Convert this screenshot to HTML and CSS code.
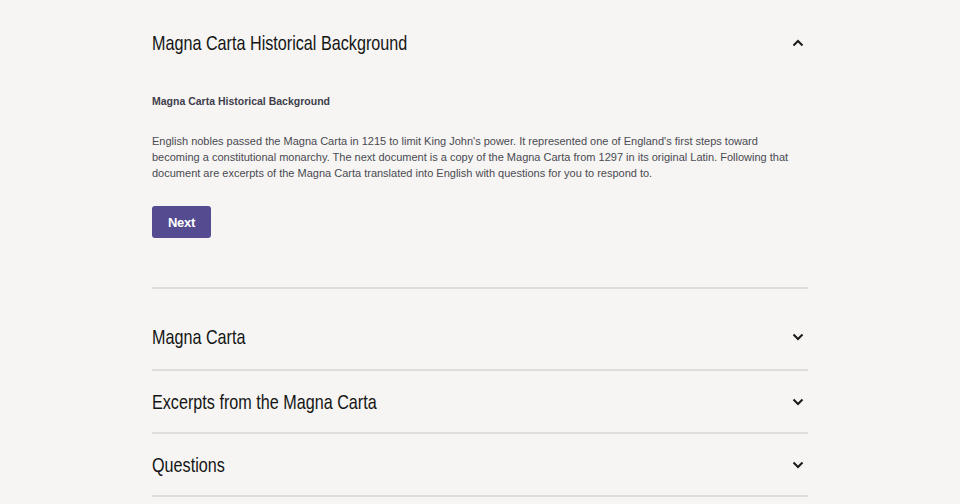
FILE: index.html
```html
<!DOCTYPE html>
<html>
<head>
<meta charset="utf-8">
<link rel="stylesheet" href="styles.css">
</head>
<body>
<div class="accordion">
  <section class="item open">
    <div class="item-head">
      <h2 class="item-title"><span>Magna Carta Historical Background</span></h2>
      <svg class="chev" width="12" height="8" viewBox="0 0 12 8"><path d="M1.5 6.5 L6 2 L10.5 6.5" fill="none" stroke="#1a1a1a" stroke-width="2"/></svg>
    </div>
    <div class="item-body">
      <h3 class="sub">Magna Carta Historical Background</h3>
      <p class="text">English nobles passed the Magna Carta in 1215 to limit King John's power. It represented one of England's first steps toward becoming a constitutional monarchy. The next document is a copy of the Magna Carta from 1297 in its original Latin. Following that document are excerpts of the Magna Carta translated into English with questions for you to respond to.</p>
      <button class="btn">Next</button>
    </div>
  </section>
  <section class="item first-closed">
    <div class="item-head">
      <h2 class="item-title"><span>Magna Carta</span></h2>
      <svg class="chev" width="12" height="8" viewBox="0 0 12 8"><path d="M1.5 1.5 L6 6 L10.5 1.5" fill="none" stroke="#1a1a1a" stroke-width="2"/></svg>
    </div>
  </section>
  <section class="item">
    <div class="item-head">
      <h2 class="item-title"><span>Excerpts from the Magna Carta</span></h2>
      <svg class="chev" width="12" height="8" viewBox="0 0 12 8"><path d="M1.5 1.5 L6 6 L10.5 1.5" fill="none" stroke="#1a1a1a" stroke-width="2"/></svg>
    </div>
  </section>
  <section class="item">
    <div class="item-head">
      <h2 class="item-title"><span>Questions</span></h2>
      <svg class="chev" width="12" height="8" viewBox="0 0 12 8"><path d="M1.5 1.5 L6 6 L10.5 1.5" fill="none" stroke="#1a1a1a" stroke-width="2"/></svg>
    </div>
  </section>
</div>
</body>
</html>
```
FILE: styles.css
```css
html, body {
  margin: 0;
  padding: 0;
  background: #f6f5f3;
}
body {
  font-family: "Liberation Sans", Arial, sans-serif;
  color: #1a1a1a;
}
.accordion {
  width: 656px;
  margin: 0 auto;
  padding-left: 8px;
  position: relative;
  left: -4px;
}
.item {
  border-bottom: 2px solid #dedddb;
}
.item-head {
  display: flex;
  align-items: center;
  justify-content: space-between;
  height: 61px;
  padding-right: 4px;
}
.open .item-head {
  height: 86px;
}
.first-closed .item-head {
  height: 64px;
  padding-top: 16px;
}
.item-title {
  margin: 0;
  font-family: "Liberation Sans", Arial, sans-serif;
  font-weight: normal;
  font-size: 21px;
  color: #151515;
}
.item-title span {
  display: inline-block;
  transform: scaleX(0.77);
  transform-origin: left center;
}
.chev {
  display: block;
}
.item-body {
  padding-top: 8px;
  padding-bottom: 49px;
}
.sub {
  margin: 0 0 25px;
  font-size: 10.5px;
  font-weight: bold;
  color: #3e3e4c;
  line-height: 14px;
}
.text {
  margin: 0 0 25px;
  font-size: 11px;
  line-height: 16px;
  color: #4a4a52;
  max-width: 650px;
}
.btn {
  display: block;
  width: 59px;
  height: 32px;
  border: none;
  border-radius: 3px;
  background: #544b91;
  color: #fff;
  font-family: "Liberation Sans", Arial, sans-serif;
  font-weight: bold;
  font-size: 13px;
  letter-spacing: -0.3px;
  padding: 0;
}
```
